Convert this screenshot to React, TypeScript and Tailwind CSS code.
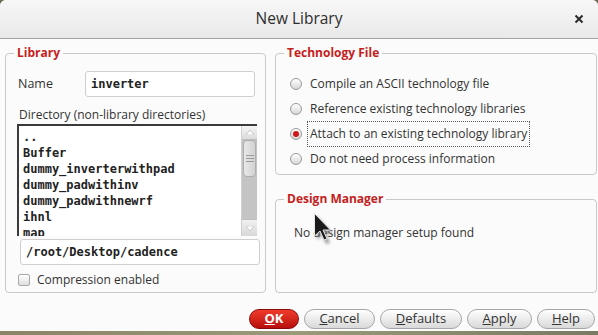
import React from "react";

const ui = { fontFamily: '"Open Sans", "Noto Sans", sans-serif' };
const mono = { fontFamily: '"DejaVu Sans Mono", "Liberation Mono", monospace' };

function Radio({ checked }: { checked?: boolean }) {
  return (
    <span className="relative inline-flex w-[12px] h-[12px] rounded-full border border-[#9a9a9a] bg-gradient-to-b from-[#ffffff] to-[#d6d6d6] items-center justify-center shrink-0">
      {checked && <span className="w-[6px] h-[6px] rounded-full bg-[#d01818]" />}
    </span>
  );
}

function Btn({ u, rest, w, red }: { u: string; rest: string; w: string; red?: boolean }) {
  return (
    <button
      className={
        red
          ? `${w} h-[20px] rounded-full border border-[#8a0b0b] bg-gradient-to-b from-[#f03a2a] to-[#b80d0d] text-white font-bold text-[13px] flex items-center justify-center`
          : `${w} h-[20px] rounded-full border border-[#a6a6a6] bg-gradient-to-b from-[#ffffff] to-[#d9d9d9] text-[#333] text-[13px] flex items-center justify-center`
      }
      style={ui}
    >
      <span>
        <span className="underline">{u}</span>
        {rest}
      </span>
    </button>
  );
}

export default function App() {
  const items = ["..", "Buffer", "dummy_inverterwithpad", "dummy_padwithinv", "dummy_padwithnewrf", "ihnl", "map"];
  return (
    <div className="w-[598px] h-[335px] bg-[#6e6a52] flex flex-col overflow-hidden" style={ui}>
      <div className="h-[331px] bg-[#fbfbfb] rounded-t-[6px] flex flex-col overflow-hidden">
        {/* title bar */}
        <div className="h-[39px] shrink-0 bg-gradient-to-b from-[#f7f7f7] to-[#e9e9e9] border-b border-[#a4a4a4] flex items-center relative">
          <div className="flex-1 text-center text-[15.5px] text-[#2e2e2e]">New Library</div>
          <svg className="absolute left-[574px] top-[14px]" width="10" height="10" viewBox="0 0 10 10">
            <path d="M1.5 1.5 L8.5 8.5 M8.5 1.5 L1.5 8.5" stroke="#2a2a2a" strokeWidth="2" />
          </svg>
        </div>

        {/* body */}
        <div className="flex gap-[9px] pl-[5px] pt-[6px] h-[254px]">
          {/* Library */}
          <fieldset className="w-[258px] h-[248px] border border-[#c9c9c9] rounded-[4px] pl-[11px] pr-[5px] flex flex-col">
            <legend className="ml-[-3px] px-[3px] text-[12px] leading-[16px] font-bold text-[#c4211c]">Library</legend>
            <div className="flex items-center mt-[10px]">
              <span className="w-[68px] pl-[1px] text-[12.5px] text-[#333]">Name</span>
              <div className="w-[170px] h-[26px] border border-[#cfcfcf] rounded-[3px] bg-white flex items-center pl-[5px] text-[12px] font-bold text-[#222]" style={mono}>
                inverter
              </div>
            </div>
            <div className="mt-[10px] text-[12px] leading-[16px] text-[#333] pl-[2px]">Directory (non-library directories)</div>
            <div className="mt-[1px] w-[240px] h-[112px] border-t-2 border-l-2 border-[#3a3a3a] bg-white flex overflow-hidden">
              <div className="flex-1 pl-[4px] pt-[3px] text-[12px] leading-[16px] font-bold text-[#222]" style={mono}>
                {items.map((t) => (
                  <div key={t}>{t}</div>
                ))}
              </div>
              <div className="w-[16px] flex flex-col bg-[#c4c4c4] border-l border-[#d0d0d0]">
                <div className="h-[14px] bg-gradient-to-b from-[#f4f4f4] to-[#dcdcdc] flex items-center justify-center border-b border-[#bdbdbd]">
                  <svg width="8" height="5" viewBox="0 0 8 5"><path d="M0 5 L4 0 L8 5Z" fill="#ffffff" stroke="#b0b0b0" strokeWidth="0.6" /></svg>
                </div>
                <div className="h-[37px] mx-[1px] rounded-[4px] bg-gradient-to-r from-[#e8e8e8] to-[#d2d2d2] border border-[#aeaeae] flex flex-col items-center justify-center gap-[2px]">
                  <span className="w-[8px] h-[1px] bg-[#9a9a9a]" />
                  <span className="w-[8px] h-[1px] bg-[#9a9a9a]" />
                  <span className="w-[8px] h-[1px] bg-[#9a9a9a]" />
                </div>
                <div className="flex-1" />
                <div className="h-[17px] bg-gradient-to-b from-[#f0f0f0] to-[#d8d8d8] flex items-center justify-center border-t border-[#bdbdbd]">
                  <svg width="8" height="5" viewBox="0 0 8 5"><path d="M0 0 L4 5 L8 0Z" fill="#ffffff" stroke="#b0b0b0" strokeWidth="0.6" /></svg>
                </div>
              </div>
            </div>
            <div className="mt-[3px] ml-[3px] w-[240px] h-[26px] border border-[#cfcfcf] rounded-[3px] bg-white flex items-center pl-[5px] text-[12px] font-bold text-[#222]" style={mono}>
              /root/Desktop/cadence
            </div>
            <div className="mt-[6px] flex items-center">
              <span className="ml-[1px] w-[12px] h-[12px] rounded-[2px] border border-[#a8a8a8] bg-gradient-to-b from-[#ffffff] to-[#dedede]" />
              <span className="ml-[7px] text-[12px] text-[#333]">Compression enabled</span>
            </div>
          </fieldset>

          {/* right column */}
          <div className="w-[322px] flex flex-col">
            <fieldset className="h-[130px] border border-[#c9c9c9] rounded-[4px] pl-[14px] flex flex-col">
              <legend className="ml-[-6px] px-[3px] text-[12px] leading-[16px] font-bold text-[#c4211c]">Technology File</legend>
              <div className="flex flex-col mt-[10px] text-[12px] text-[#333]">
                <div className="flex items-center h-[25px]"><Radio /><span className="ml-[8px]">Compile an ASCII technology file</span></div>
                <div className="flex items-center h-[25px]"><Radio /><span className="ml-[8px]">Reference existing technology libraries</span></div>
                <div className="flex items-center h-[25px]"><Radio checked /><span className="ml-[5px] px-[2px] py-[3px] border border-dotted border-[#555]">Attach to an existing technology library</span></div>
                <div className="flex items-center h-[25px]"><Radio /><span className="ml-[8px]">Do not need process information</span></div>
              </div>
            </fieldset>
            <fieldset className="mt-[16px] h-[102px] border border-[#c9c9c9] rounded-[4px] pl-[18px] relative">
              <legend className="ml-[-10px] px-[3px] text-[12px] leading-[16px] font-bold text-[#c4211c]">Design Manager</legend>
              <div className="mt-[17px] text-[12px] text-[#333]">No design manager setup found</div>
              <svg className="absolute left-[37px] top-[5px]" width="24" height="34" viewBox="0 0 24 34">
                <defs>
                  <filter id="sh" x="-50%" y="-50%" width="200%" height="200%">
                    <feGaussianBlur stdDeviation="1.8" />
                  </filter>
                </defs>
                <path d="M4 4 L4 28 L9 23 L13 32 L17 31 L13 22 L20 22 Z" fill="#666" opacity="0.6" filter="url(#sh)" />
                <path d="M1.5 1.5 L1.5 24 L7 19 L11 28 L14 26.8 L10 18 L17.5 18 Z" fill="#1a1a1a" stroke="#e6e6e6" strokeWidth="1" />
              </svg>
            </fieldset>
          </div>
        </div>

        {/* buttons */}
        <div className="flex justify-end gap-[5px] pr-[3px] mt-[16px]">
          <Btn red u="O" rest="K" w="w-[50px]" />
          <Btn u="C" rest="ancel" w="w-[71px]" />
          <Btn u="D" rest="efaults" w="w-[82px]" />
          <Btn u="A" rest="pply" w="w-[65px]" />
          <Btn u="H" rest="elp" w="w-[58px]" />
        </div>
      </div>
      <div className="flex-1 bg-gradient-to-r from-[#8a8466] via-[#9a9a7a] to-[#7a7a62]" />
    </div>
  );
}
